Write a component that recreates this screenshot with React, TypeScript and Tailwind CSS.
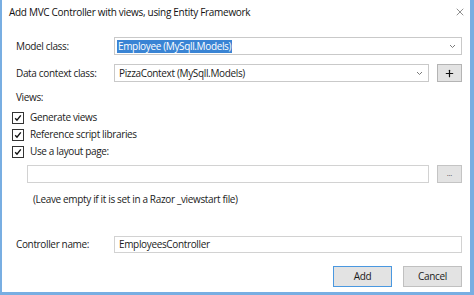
import { X, Plus } from 'lucide-react';

const Chevron = () => (
  <svg width="7" height="5" viewBox="0 0 7 5" className="shrink-0">
    <path d="M1 1 L3.5 3.5 L6 1" fill="none" stroke="#7a7a7a" strokeWidth="1" />
  </svg>
);

const Check = () => (
  <div className="w-[12px] h-[12px] border border-[#333333] bg-white flex items-center justify-center shrink-0">
    <svg width="8" height="8" viewBox="0 0 8 8">
      <path d="M1.2 4.2 L3 6.2 L6.8 1.4" fill="none" stroke="#111111" strokeWidth="1.4" />
    </svg>
  </div>
);

const CheckRow = ({ label }: { label: string }) => (
  <div className="h-[17px] flex items-center -ml-[4px] gap-[6px]">
    <Check />
    <span>{label}</span>
  </div>
);

export default function App() {
  return (
    <div
      className="w-[474px] h-[295px] bg-white border-l-2 border-r-4 border-b-[3px] border-[#78aee2] flex flex-col text-[10px] text-[#1b1b1b] tracking-[-0.35px] overflow-hidden"
      style={{ fontFamily: '"Open Sans", "Noto Sans", sans-serif' }}
    >
      {/* Title bar */}
      <div className="h-[24px] flex items-center justify-between pl-[7px] pr-[4px]">
        <span className="text-[#111111] tracking-[-0.3px]">Add MVC Controller with views, using Entity Framework</span>
        <X className="w-[12px] h-[12px] text-[#333333]" strokeWidth={1.1} />
      </div>

      <div className="flex flex-col pl-[14px] pr-[8px]">
        {/* Model class */}
        <div className="mt-[13px] h-[18px] flex items-center">
          <span className="w-[98px] shrink-0">Model class:</span>
          <div className="flex-1 h-full border border-[#c9c9c9] flex items-center justify-between pl-[2px] pr-[5px]">
            <span className="bg-[#3a84d4] text-white px-[1px] leading-[13px]">Employee (MySqll.Models)</span>
            <Chevron />
          </div>
        </div>

        {/* Data context class */}
        <div className="mt-[9px] h-[18px] flex items-center">
          <span className="w-[98px] shrink-0">Data context class:</span>
          <div className="w-[315px] h-full border border-[#c9c9c9] flex items-center justify-between pl-[4px] pr-[5px]">
            <span>PizzaContext (MySqll.Models)</span>
            <Chevron />
          </div>
          <div className="ml-[8px] w-[25px] h-full bg-[#e3e3e3] border border-[#b4b4b4] flex items-center justify-center">
            <Plus className="w-[11px] h-[11px] text-[#111111]" strokeWidth={2.6} />
          </div>
        </div>

        {/* Views */}
        <div className="mt-[8px] h-[14px] flex items-center">Views:</div>
        <div className="mt-[5px] flex flex-col">
          <CheckRow label="Generate views" />
          <CheckRow label="Reference script libraries" />
          <CheckRow label="Use a layout page:" />
        </div>

        {/* Layout page */}
        <div className="mt-[5px] h-[18px] flex items-center pl-[11px]">
          <div className="w-[402px] h-full border border-[#d2d2d2]" />
          <div className="ml-[8px] w-[25px] h-full bg-[#e3e3e3] border border-[#c4c4c4] flex items-center justify-center text-[8px] text-[#555555] leading-none pb-[2px]">
            ...
          </div>
        </div>
        <div className="mt-[9px] h-[14px] flex items-center pl-[17px]">
          (Leave empty if it is set in a Razor _viewstart file)
        </div>

        {/* Controller name */}
        <div className="mt-[30px] h-[17px] flex items-center">
          <span className="w-[98px] shrink-0">Controller name:</span>
          <div className="flex-1 h-full border border-[#d2d2d2] flex items-center pl-[4px]">
            EmployeesController
          </div>
        </div>

        {/* Buttons */}
        <div className="mt-[13px] h-[21px] flex justify-end gap-[11px]">
          <div className="w-[59px] h-full bg-[#e3e3e3] border border-[#4a98e0] flex items-center justify-center">
            Add
          </div>
          <div className="w-[59px] h-full bg-[#e3e3e3] border border-[#c0c0c0] flex items-center justify-center">
            Cancel
          </div>
        </div>
      </div>
    </div>
  );
}
